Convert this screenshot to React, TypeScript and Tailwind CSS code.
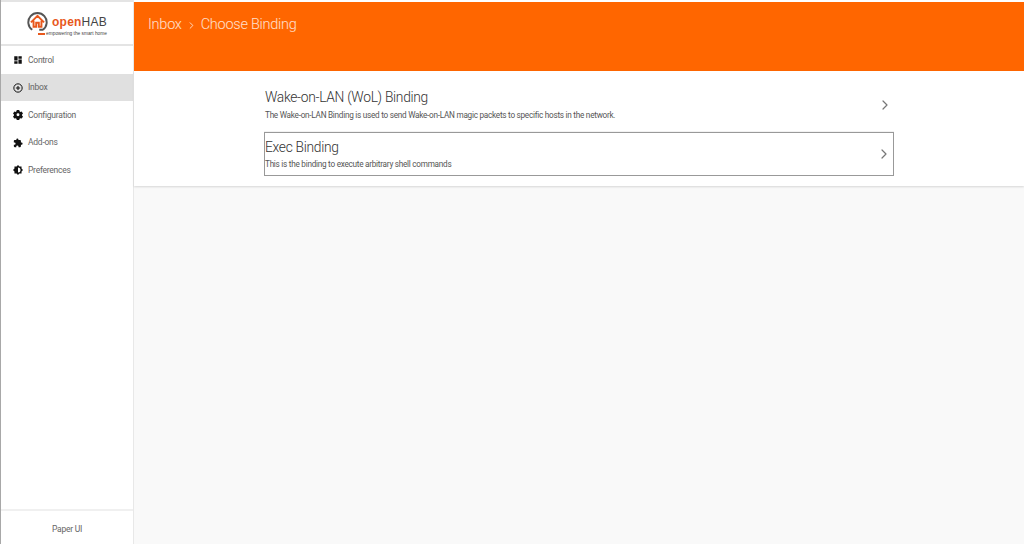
import { ChevronRight } from "lucide-react";

const navItems = [
  { label: "Control", icon: "M3 3h8v10H3zM3 15h8v6H3zM13 3h8v6h-8zM13 11h8v10h-8z" },
  { label: "Inbox", icon: "inbox" },
  { label: "Configuration", icon: "gear" },
  { label: "Add-ons", icon: "M20.5 11H19V7a2 2 0 0 0-2-2h-4V3.5a2.5 2.5 0 0 0-5 0V5H4a2 2 0 0 0-2 2v3.800h1.500a2.700 2.700 0 0 1 0 5.400H2V20a2 2 0 0 0 2 2h3.800v-1.500a2.700 2.700 0 0 1 5.400 0V22H17a2 2 0 0 0 2-2v-4h1.500a2.500 2.500 0 0 0 0-5z" },
  { label: "Preferences", icon: "prefs" },
];

function NavIcon({ icon }: { icon: string }) {
  if (icon === "inbox") {
    return (
      <svg viewBox="0 0 24 24" className="w-[10px] h-[10px]">
        <circle cx="12" cy="12" r="10" fill="none" stroke="#111" strokeWidth="2.400" />
        <path d="M12 7v10M7 12h10" stroke="#111" strokeWidth="2.600" />
      </svg>
    );
  }
  if (icon === "gear") {
    return (
      <svg viewBox="0 0 24 24" className="w-[10px] h-[10px]">
        <path
          fill="#111"
          fillRule="evenodd"
          d="M9 1h6l.7 3.200 2.200 1.300 3.100-1 3 5.200-2.400 2.200v2.200L24 16.300l-3 5.200-3.100-1-2.200 1.300L15 25H9l-.7-3.200-2.200-1.300-3.100 1-3-5.200 2.400-2.200v-2.200L0 9.700l3-5.200 3.100 1 2.200-1.300zM12 9a3.500 3.500 0 1 0 0 7 3.500 3.500 0 0 0 0-7z"
          transform="translate(0 -1)"
        />
      </svg>
    );
  }
  if (icon === "prefs") {
    return (
      <svg viewBox="0 0 24 24" className="w-[10px] h-[10px]">
        <path
          fill="#111"
          fillRule="evenodd"
          d="M12 0l3.500 3.500H20.500V8.500L24 12l-3.500 3.500v5H15.500L12 24l-3.500-3.500H3.500v-5L0 12l3.500-3.500v-5H8.500zM12 6v12a6 6 0 0 0 0-12z"
        />
      </svg>
    );
  }
  return (
    <svg viewBox="0 0 24 24" className="w-[10px] h-[10px]">
      <path fill="#111" d={icon} />
    </svg>
  );
}

function Logo() {
  return (
    <div className="flex items-start mt-[1px]">
      <svg viewBox="0 0 24 24" className="w-[21px] h-[21px] shrink-0">
        <path d="M6 21.500A10.500 10.500 0 1 1 18 21.500H14" fill="none" stroke="#555" strokeWidth="2.200" />
        <path d="M4.500 13l7.500-7.500 7.500 7.500M7.500 11v7h3V13.500h3V18h3V11" fill="none" stroke="#e8581c" strokeWidth="2.200" />
      </svg>
      <div className="flex flex-col items-start pt-[5px] -ml-[10px]">
        <div className="text-[12px] leading-[13px] tracking-[0.2px] font-['Liberation_Sans',sans-serif] pl-[14px]">
          <span className="text-[#e8581c] font-bold">open</span>
          <span className="text-[#444]">HAB</span>
        </div>
        <div className="flex items-center mt-[2px] gap-[1px]">
          <span className="w-[7px] h-[2px] bg-[#e8581c]" />
          <span className="text-[4.800px] leading-[6px] text-[#444] font-['Liberation_Sans',sans-serif] whitespace-nowrap">
            empowering the smart home
          </span>
        </div>
      </div>
    </div>
  );
}

export default function App() {
  return (
    <div className="flex w-[1024px] h-[544px] overflow-hidden bg-[#f9f9f9] font-['Roboto',sans-serif]">
      <aside className="w-[134px] shrink-0 flex flex-col bg-white border-l border-l-[#a8a8a8] border-r border-r-[#e8e8e8]">
        <div className="h-[46px] shrink-0 flex items-center justify-center border-b-2 border-[#e4e4e4] border-t-2 border-t-[#e4e4e4]">
          <Logo />
        </div>
        <nav className="flex flex-col">
          {navItems.map((item) => (
            <div
              key={item.label}
              className={`h-[27.500px] flex items-center pl-[12px] gap-[5px] pt-[1px] text-[8.500px] tracking-[-0.25px] text-[#666] ${
                item.label === "Inbox" ? "bg-[#e0e0e0]" : ""
              }`}
            >
              <NavIcon icon={item.icon} />
              <span>{item.label}</span>
            </div>
          ))}
        </nav>
        <div className="mt-auto h-[35px] border-t-2 border-[#f0f0f0] flex items-center justify-center pt-[3px] text-[8.500px] tracking-[-0.25px] text-[#666]">
          Paper UI
        </div>
      </aside>
      <div className="flex-1 flex flex-col min-w-0">
        <div className="h-[2px] bg-white" />
        <header className="h-[69px] bg-[#ff6600] px-[14px] pt-[14px] flex items-start gap-[4px] text-white/80 text-[14.500px] tracking-[-0.25px] leading-[18px] font-light shrink-0">
          <span>Inbox</span>
          <ChevronRight size={11} strokeWidth={1.800} className="mt-[4px] text-white/90" />
          <span>Choose Binding</span>
        </header>
        <section className="h-[115px] bg-white shadow-[0_1px_2px_rgba(0,0,0,0.14)] pl-[130px] pr-[130px] pt-[5px]">
          <div className="w-[630px] h-[56px] flex items-center justify-between pl-[1px] pr-[1px] pt-[2px] border-b border-[#f2f2f2]">
            <div>
              <div className="text-[13.800px] tracking-[-0.3px] leading-[18px] text-[#333] font-light">Wake-on-LAN (WoL) Binding</div>
              <div className="text-[8.200px] tracking-[-0.26px] leading-[11px] mt-[4px] text-[#555]">
                The Wake-on-LAN Binding is used to send Wake-on-LAN magic packets to specific hosts in the network.
              </div>
            </div>
            <ChevronRight size={16} strokeWidth={1.800} className="text-[#777] mt-[1px]" />
          </div>
          <div className="w-[630px] h-[44px] flex items-center justify-between pr-[1px] border border-[#999]">
            <div className="-mt-[1px]">
              <div className="text-[13.800px] tracking-[-0.3px] leading-[18px] text-[#333] font-light">Exec Binding</div>
              <div className="text-[8.200px] tracking-[-0.26px] leading-[11px] mt-[3px] text-[#555]">
                This is the binding to execute arbitrary shell commands
              </div>
            </div>
            <ChevronRight size={16} strokeWidth={1.800} className="text-[#777]" />
          </div>
        </section>
      </div>
    </div>
  );
}
